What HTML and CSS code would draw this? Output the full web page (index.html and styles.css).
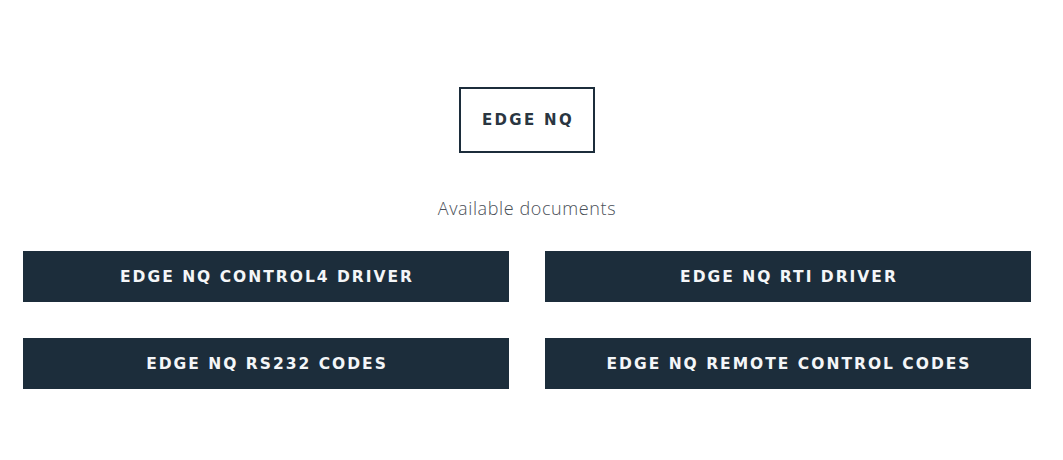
FILE: index.html
```html
<!DOCTYPE html>
<html lang="en">
<head>
<meta charset="utf-8">
<title>EDGE NQ</title>
<link rel="stylesheet" href="styles.css">
</head>
<body>
<main class="page">
  <div class="title-wrap">
    <h1 class="product-title">EDGE NQ</h1>
  </div>
  <p class="subtitle">Available documents</p>
  <div class="docs">
    <a class="doc-btn" href="#">EDGE NQ CONTROL4 DRIVER</a>
    <a class="doc-btn" href="#">EDGE NQ RTI DRIVER</a>
    <a class="doc-btn" href="#">EDGE NQ RS232 CODES</a>
    <a class="doc-btn" href="#">EDGE NQ REMOTE CONTROL CODES</a>
  </div>
</main>
</body>
</html>
```

FILE: styles.css
```css
* { box-sizing: border-box; }
html, body { margin: 0; padding: 0; background: #ffffff; }
body { font-family: "DejaVu Sans", "Open Sans", sans-serif; color: #1c2d3b; }
.page {
  width: 1063px;
  height: 460px;
  padding: 87px 32px 0 23px;
}
.title-wrap {
  display: flex;
  justify-content: center;
}
.product-title {
  margin: 0;
  width: 136px;
  height: 66px;
  border: 2px solid #1c2d3b;
  display: flex;
  align-items: center;
  justify-content: center;
  padding-left: 2px;
  font-size: 15px;
  font-weight: 700;
  letter-spacing: 2.3px;
  color: #2a3641;
}
.subtitle {
  margin: 44px 0 0 0;
  text-align: center;
  font-family: "Open Sans", sans-serif;
  font-weight: 300;
  font-size: 18px;
  letter-spacing: 0.6px;
  line-height: 22px;
  color: #4a5058;
}
.docs {
  margin-top: 32px;
  display: grid;
  grid-template-columns: 486px 486px;
  column-gap: 36px;
  row-gap: 36px;
}
.doc-btn {
  height: 51px;
  background: #1c2d3b;
  color: #f4f6f8;
  text-decoration: none;
  display: flex;
  align-items: center;
  justify-content: center;
  padding-left: 2px;
  font-size: 15.5px;
  font-weight: 700;
  letter-spacing: 2px;
}
```
